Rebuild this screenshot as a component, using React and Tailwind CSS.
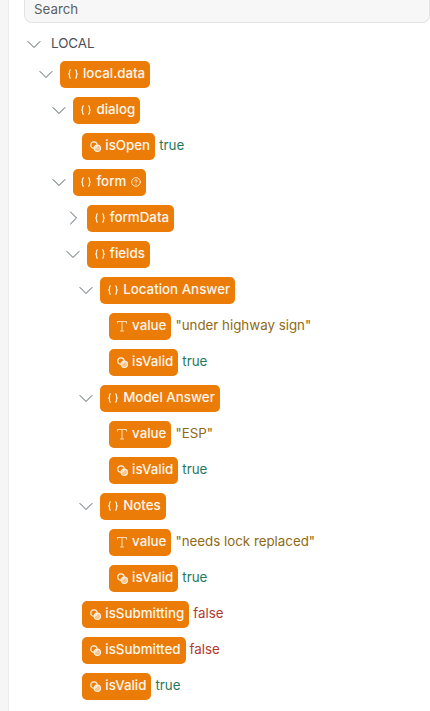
import React from "react";

const Chevron = ({ open }) => (
  <span className="flex w-5 mr-1 shrink-0 items-center justify-center text-[#55606a]">
    <svg width="14" height="14" viewBox="0 0 14 14" fill="none" stroke="currentColor" strokeWidth="1" strokeLinecap="round" strokeLinejoin="round">
      {open ? <path d="M1 4.500 7 10.500l6-6" /> : <path d="M4.500 1 10.500 7l-6 6" />}
    </svg>
  </span>
);

const Braces = () => (
  <svg className="shrink-0" width="12" height="12" viewBox="0 0 12 12" fill="none" stroke="#fff1df" strokeWidth="1.200" strokeLinecap="round" strokeLinejoin="round">
    <path d="M3.400 1.800C2.500 2 2.500 2.800 2.500 3.600v1.200c0 .6-.4 1.200-1 1.200.6 0 1 .6 1 1.200v1.200c0 .8 0 1.600.9 1.800" />
    <path d="M8.600 1.800C9.500 2 9.500 2.800 9.500 3.600v1.200c0 .6.400 1.200 1 1.200-.6 0-1 .6-1 1.200v1.200c0 .8 0 1.600-.9 1.800" />
  </svg>
);

const Bool = () => (
  <svg className="shrink-0" width="13" height="13" viewBox="0 0 13 13" fill="none" stroke="#fff1df" strokeWidth="1.200">
    <circle cx="5" cy="5" r="3.200" />
    <circle cx="8.300" cy="8.300" r="3.200" fill="#fde3c4" fillOpacity="0.7" />
  </svg>
);

const TextIcon = () => (
  <svg className="shrink-0" width="14" height="14" viewBox="0 0 14 14" fill="none" stroke="#fbd9b0" strokeWidth="1.100" strokeLinecap="round" strokeLinejoin="round">
    <path d="M2.500 4V2.500h9V4M7 2.500v9.500M5.500 12h3" />
  </svg>
);

const Help = () => (
  <svg className="shrink-0 ml-[5px]" width="10" height="10" viewBox="0 0 10 10" fill="none" stroke="#fff1df" strokeWidth="0.900" strokeLinecap="round">
    <circle cx="5" cy="5" r="4.300" />
    <path d="M3.800 4c0-.7.500-1.100 1.200-1.100s1.200.4 1.200 1c0 .9-1.200.9-1.200 1.800" />
    <path d="M5 7.300v.1" />
  </svg>
);

const Pill = ({ icon, label, extra }) => (
  <span className="flex h-[27px] items-center rounded-[5px] bg-[#ea7c07] pl-[6px] pr-[5px] text-[13.330px] font-medium leading-none text-[#fff6ec]">
    <span className="mr-[3px] flex w-[14px] justify-center">{icon}</span>
    {label}
    {extra}
  </span>
);

const Node = ({ label, open = true, extra, children }) => (
  <div>
    <div className="flex h-9 items-center">
      <Chevron open={open} />
      <Pill icon={<Braces />} label={label} extra={extra} />
    </div>
    {children && <div className="pl-[13.400px]">{children}</div>}
  </div>
);

const Leaf = ({ label, value, kind }) => (
  <div className="ml-[10.500px] flex h-9 items-center gap-1 pl-[9px]">
    <Pill icon={kind === "str" ? <TextIcon /> : <Bool />} label={label} />
    <span
      className={
        kind === "str"
          ? "text-[13.330px] text-[#8f6a12]"
          : value === "false"
            ? "text-[13.330px] text-[#b03a2e]"
            : "text-[13.330px] text-[#1f7a5c]"
      }
    >
      {value}
    </span>
  </div>
);

export default function App() {
  return (
    <div className="flex h-[711px] w-[430px] overflow-hidden bg-white font-['Inter','Liberation_Sans',sans-serif]">
      <div className="w-[9px] shrink-0 border-r border-[#ececec] bg-[#f6f6f6]" />
      <div className="min-w-0 flex-1 pl-[15px]">
        <div className="flex h-[23px] items-center rounded-b-lg border border-t-0 border-[#e3e3e3] bg-[#f7f7f7] pb-[3px] pl-[9px] text-[13.330px] text-[#5c5f63]">
          Search
        </div>
        <div className="flex h-[41px] items-center">
          <Chevron open />
          <span className="pl-[3px] text-[13.330px] text-[#4b5157]">LOCAL</span>
        </div>
        <div className="-mt-[8px] pl-[12px]">
          <Node label="local.data">
            <Node label="dialog">
              <Leaf label="isOpen" value="true" kind="bool" />
            </Node>
            <Node label="form" extra={<Help />}>
              <Node label="formData" open={false} />
              <Node label="fields">
                <Node label="Location Answer">
                  <Leaf label="value" value={'"under highway sign"'} kind="str" />
                  <Leaf label="isValid" value="true" kind="bool" />
                </Node>
                <Node label="Model Answer">
                  <Leaf label="value" value={'"ESP"'} kind="str" />
                  <Leaf label="isValid" value="true" kind="bool" />
                </Node>
                <Node label="Notes">
                  <Leaf label="value" value={'"needs lock replaced"'} kind="str" />
                  <Leaf label="isValid" value="true" kind="bool" />
                </Node>
              </Node>
              <Leaf label="isSubmitting" value="false" kind="bool" />
              <Leaf label="isSubmitted" value="false" kind="bool" />
              <Leaf label="isValid" value="true" kind="bool" />
            </Node>
          </Node>
        </div>
      </div>
    </div>
  );
}
